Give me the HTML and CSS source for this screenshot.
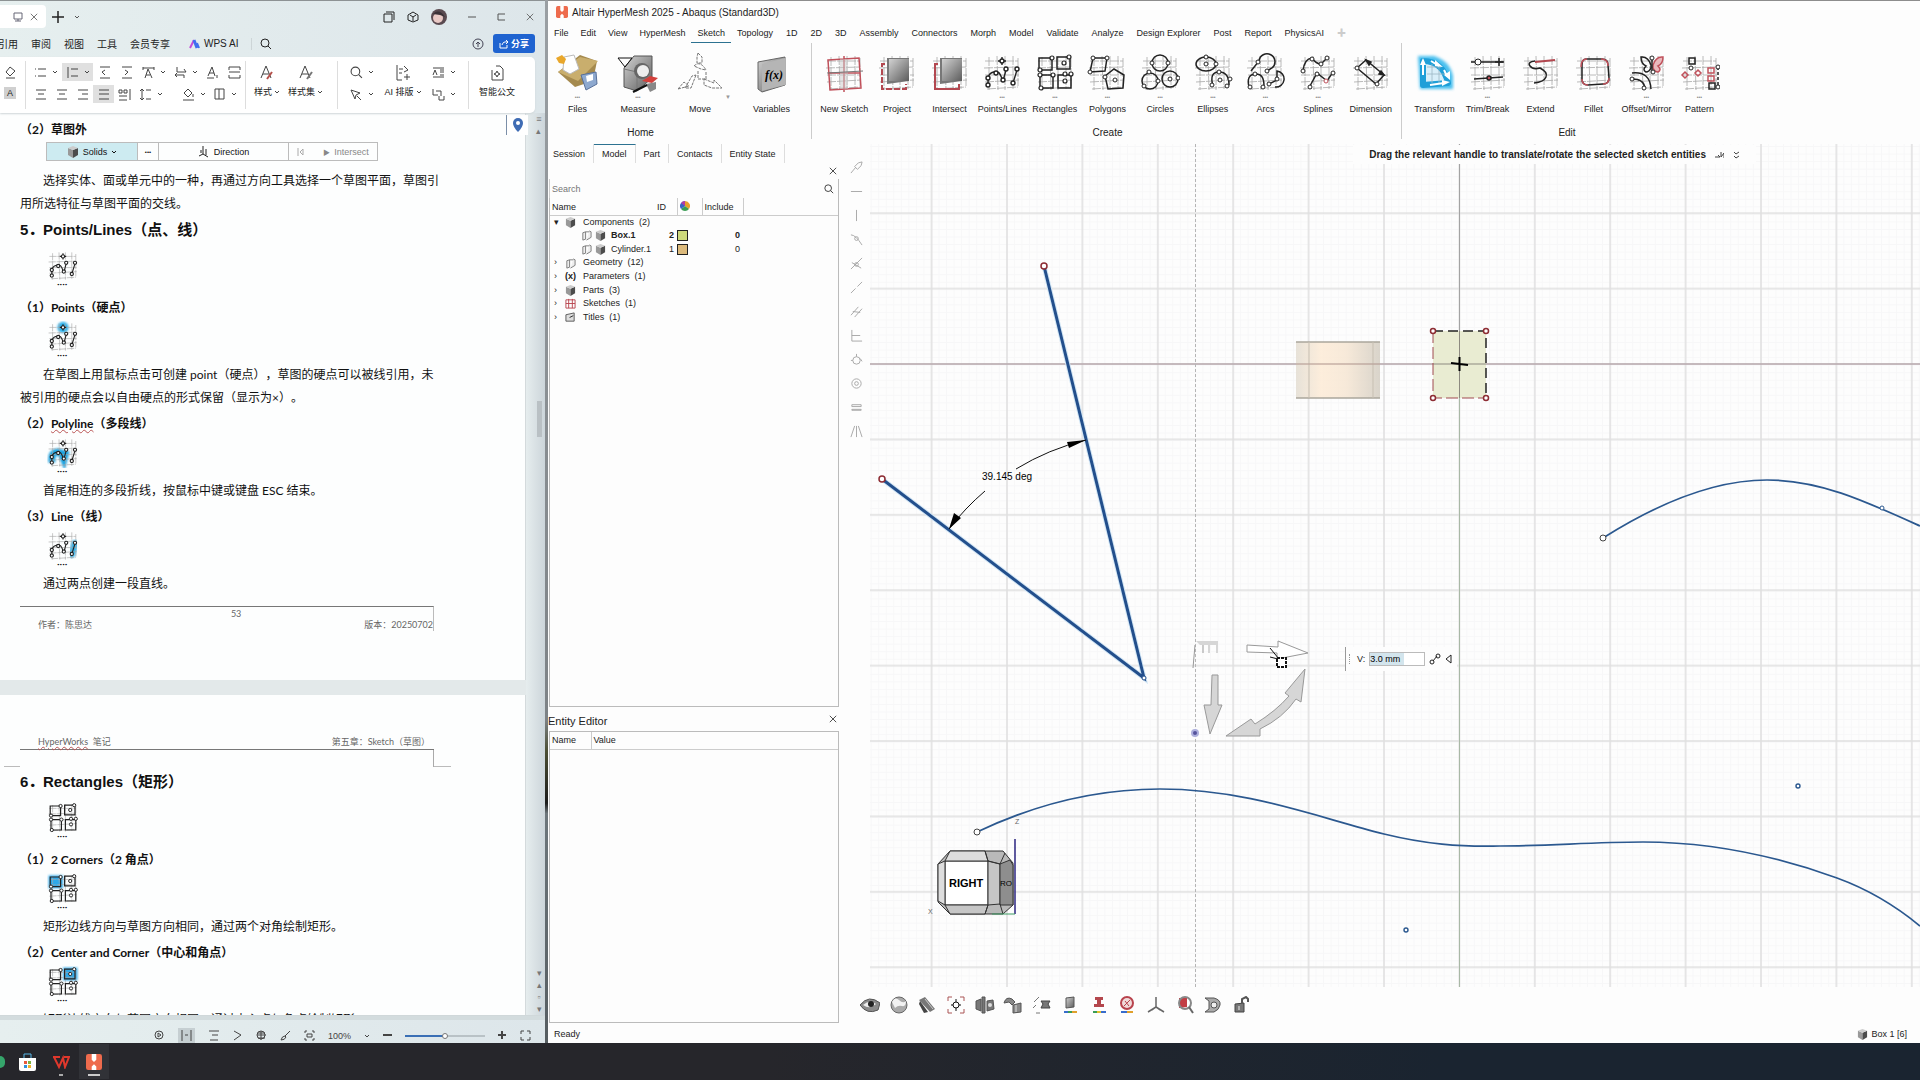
FILE: index.html
```html
<!DOCTYPE html>
<html lang="zh-CN">
<head>
  <meta charset="UTF-8">
  <meta name="viewport" content="width=device-width, initial-scale=1.0">
  <title>Altair HyperMesh 2025 - Abaqus (Standard3D)</title>
  <link rel="stylesheet" href="styles.css">
</head>
<body>
  <!-- shared icons -->
  <svg class="defs" aria-hidden="true">
    <defs>
      <linearGradient id="steel" x1="0" y1="0" x2="1" y2="1">
        <stop offset="0" stop-color="#d2d2d2"/><stop offset="1" stop-color="#5c5c5c"/>
      </linearGradient>
      <linearGradient id="cyl" x1="0" x2="1">
        <stop offset="0" stop-color="#e3ddd2"/><stop offset=".3" stop-color="#fdebd6"/>
        <stop offset=".6" stop-color="#f6e6d3"/><stop offset="1" stop-color="#d3cdc2"/>
      </linearGradient>
      <filter id="glow" x="-40%" y="-40%" width="180%" height="180%"><feGaussianBlur stdDeviation="1.5"/></filter>
    </defs>
    <symbol id="grid" viewBox="0 0 40 40">
      <path d="M3 8h33M2 15l34-1M3 22h34M3 29l34-2M5 36l31-2M7 4v33M15 3l1 34M23 3v34M31 3v33M36 5v28" stroke="#a8a8a8" stroke-width=".8" fill="none" stroke-dasharray="9 1"/>
    </symbol>
    <symbol id="points" viewBox="0 0 40 40">
      <use href="#grid"/>
      <g fill="none" stroke="#222" stroke-width="1.4">
        <path d="M20 4v8M16 8h8M6 32c0-8 0-12 6-13s6 2 9 9M21 28l3-11M31 30l4-13"/>
        <g fill="#fff"><circle cx="20" cy="8" r="2"/><circle cx="6" cy="32" r="2"/><circle cx="6" cy="25" r="2"/><circle cx="14" cy="20" r="2"/><circle cx="21" cy="27" r="2"/><circle cx="24" cy="16" r="2"/><circle cx="31" cy="30" r="2"/><circle cx="35" cy="16" r="2"/></g>
      </g>
    </symbol>
    <symbol id="rects" viewBox="0 0 40 40">
      <use href="#grid"/>
      <g fill="none" stroke="#222" stroke-width="1.5">
        <path d="M4 5h13v12H4zM22 4h13v12H22zM5 22h13v13H5zM23 22h13v13H23z"/>
        <g fill="#fff" stroke-width="1.2"><circle cx="17" cy="5" r="2"/><circle cx="5" cy="17" r="2"/><circle cx="34" cy="4" r="2"/><circle cx="29" cy="10" r="2"/><circle cx="5" cy="22" r="2"/><circle cx="18" cy="22" r="2"/><circle cx="6" cy="35" r="2"/><circle cx="30" cy="21" r="2"/><circle cx="36" cy="21" r="2"/><circle cx="30" cy="28" r="2"/></g>
      </g>
    </symbol>
    <symbol id="hm" viewBox="0 0 14 14">
      <rect width="14" height="14" rx="2" fill="#ee6b4d"/><path d="M5 0v5l2 2 2-2V0zM5 14v-3l2-2 2 2v3z" fill="#fff"/>
    </symbol>
    <symbol id="sheet" viewBox="0 0 12 12">
      <path d="M2 3l3-1v8l-3 1zM5 2h4M9 1l2 1v6L6 11" fill="#eee" stroke="#777"/>
    </symbol>
    <symbol id="block" viewBox="0 0 12 12">
      <path d="M1 2l5 2v8l-5-3z" fill="#999"/><path d="M6 4l5-2v7l-5 3z" fill="#4c4c4c"/><path d="M1 2l5-2 5 2-5 2z" fill="#ccc"/>
    </symbol>
    <symbol id="search" viewBox="0 0 12 12">
      <circle cx="5" cy="5" r="4" fill="none" stroke="currentColor"/><path d="M8 8l3 3" stroke="currentColor"/>
    </symbol>
    <symbol id="close" viewBox="0 0 10 10"><path d="M1 1l8 8M9 1L1 9" stroke="currentColor"/></symbol>
    <symbol id="chev" viewBox="0 0 6 6"><path d="M1 2l2 2 2-2" fill="none" stroke="currentColor"/></symbol>
  </svg>

  <main class="desktop">
    <!-- WPS Writer -->
    <section class="wps">
      <header class="wps-title">
        <div class="wps-tab">
          <svg width="12" height="12" viewBox="0 0 12 12"><path d="M2 2h8v6H2zM6 8v2M3 10h6" fill="none" stroke="#667"/></svg>
          <svg width="8" height="8"><use href="#close"/></svg>
        </div>
        <button class="plus" aria-label="New tab"><svg width="12" height="12" viewBox="0 0 12 12"><path d="M6 0v12M0 6h12" stroke="#222" stroke-width="1.5"/></svg></button>
        <svg width="6" height="6"><use href="#chev"/></svg>
        <div class="win-buttons">
          <button aria-label="Windows"><svg width="12" height="12" viewBox="0 0 12 12"><path d="M1 3h8v8H1zM3 1h8v8" fill="none" stroke="#222"/></svg></button>
          <button aria-label="Apps"><svg width="12" height="12" viewBox="0 0 12 12"><path d="M6 1l5 3v5l-5 2-5-2V4zM3 4l3 2 3-2M6 6v4" fill="none" stroke="#222"/></svg></button>
          <button aria-label="Account"><svg width="16" height="16" viewBox="0 0 16 16"><circle cx="8" cy="8" r="8" fill="#5a4a50"/><circle cx="7" cy="9" r="5" fill="#e9c9c5"/><path d="M2 5q6-6 12 3l-5-2z" fill="#3b3238"/></svg></button>
          <button aria-label="Minimize"><svg width="8" height="8" viewBox="0 0 8 8"><path d="M0 4h8" stroke="#555"/></svg></button>
          <button aria-label="Maximize"><svg width="8" height="8" viewBox="0 0 8 8"><path d="M1 1h7M1 1v6h7" fill="none" stroke="#555"/></svg></button>
          <button aria-label="Close"><svg width="8" height="8"><use href="#close"/></svg></button>
        </div>
      </header>

      <nav class="wps-menu">
        <a href="#" class="cut">引用</a>
        <a href="#">审阅</a>
        <a href="#">视图</a>
        <a href="#">工具</a>
        <a href="#">会员专享</a>
        <a href="#" class="ai"><svg width="11" height="10" viewBox="0 0 11 10"><path d="M1 9l4-8" stroke="#c54bd8" stroke-width="2"/><path d="M5 1l3 8" stroke="#3f6ff0" stroke-width="3"/><path d="M8 4l2 5" stroke="#3f6ff0" stroke-width="2"/></svg>WPS AI</a>
        <button class="find" aria-label="Search"><svg width="12" height="12"><use href="#search"/></svg></button>
        <svg class="cloud" width="12" height="12" viewBox="0 0 12 12"><circle cx="6" cy="6" r="5" fill="none" stroke="#445"/><path d="M6 9V4M4 6l2-2 2 2" fill="none" stroke="#445"/></svg>
        <button class="share"><svg width="10" height="10" viewBox="0 0 10 10"><path d="M1 4v5h7V6M3 6q1-4 6-3M7 1l2 2-2 2" fill="none" stroke="#fff"/></svg>分享</button>
      </nav>

      <div class="wps-ribbon">
        <div class="rb rb-first">
          <button aria-label="Eraser"><svg width="13" height="13" viewBox="0 0 13 13"><path d="M6 1l5 4-5 5-4-4zM2 12h9" /></svg></button>
          <button class="shade" aria-label="Shading">A</button>
        </div>
        <div class="rb rb-para">
          <div class="rb-row">
            <button class="wide" aria-label="Bullets"><svg width="13" height="13" viewBox="0 0 13 13"><path d="M1 3h1M1 10h1M4 3h8M4 10h8"/></svg><svg class="c"><use href="#chev"/></svg></button>
            <button class="wide on" aria-label="Numbering"><svg width="13" height="13" viewBox="0 0 13 13"><path d="M2 1v11M5 3h7M5 10h7"/></svg><svg class="c"><use href="#chev"/></svg></button>
            <button aria-label="Outdent"><svg width="13" height="13" viewBox="0 0 13 13"><path d="M2 1h10M2 12h10M7 4L4 6l3 3"/></svg></button>
            <button aria-label="Indent"><svg width="13" height="13" viewBox="0 0 13 13"><path d="M2 1h10M2 12h10M5 4l3 2-3 3"/></svg></button>
            <button class="wide" aria-label="Char scale"><svg width="13" height="13" viewBox="0 0 13 13"><path d="M3 12l3-9 4 9M4 9h4M1 2h11M1 1v3M12 1v3"/></svg><svg class="c"><use href="#chev"/></svg></button>
            <button class="wide" aria-label="Direction"><svg width="13" height="13" viewBox="0 0 13 13"><path d="M3 1v5h9M10 3l2 3M1 9h9v3M3 7L1 9l2 2"/></svg><svg class="c"><use href="#chev"/></svg></button>
            <button aria-label="Font box"><svg width="13" height="13" viewBox="0 0 13 13"><path d="M2 10l4-9 3 9M3 7h5M1 12h7M11 9v3"/></svg></button>
            <button aria-label="Marks"><svg width="13" height="13" viewBox="0 0 13 13"><path d="M1 4V1h11v3M1 9v3h11V9M1 6h11"/></svg></button>
          </div>
          <div class="rb-row">
            <button aria-label="Left"><svg width="13" height="13" viewBox="0 0 13 13"><path d="M2 2h10M2 11h10M4 6h6"/></svg></button>
            <button aria-label="Center"><svg width="13" height="13" viewBox="0 0 13 13"><path d="M2 2h10M4 6h6M2 11h10"/></svg></button>
            <button aria-label="Right"><svg width="13" height="13" viewBox="0 0 13 13"><path d="M2 2h10M6 6h6M2 11h10"/></svg></button>
            <button class="on" aria-label="Justify"><svg width="13" height="13" viewBox="0 0 13 13"><path d="M2 2h10M2 6h10M2 11h10"/></svg></button>
            <button aria-label="Distribute"><svg width="13" height="13" viewBox="0 0 13 13"><path d="M1 2h3v3H1zM6 2h3v3H6zM1 8h8M1 12h8M12 1v11"/></svg></button>
            <button class="wide" aria-label="Spacing"><svg width="13" height="13" viewBox="0 0 13 13"><path d="M3 1v11M1 3l2-2 2 2M1 10l2 2 2-2M7 2h5M7 11h5"/></svg><svg class="c"><use href="#chev"/></svg></button>
            <button class="wide gap" aria-label="Fill"><svg width="13" height="13" viewBox="0 0 13 13"><path d="M6 1l4 4-4 4-4-4zM1 12h11M11 6v3"/></svg><svg class="c"><use href="#chev"/></svg></button>
            <button class="wide" aria-label="Borders"><svg width="13" height="13" viewBox="0 0 13 13"><path d="M2 1h9v10H2zM6 1v10"/></svg><svg class="c"><use href="#chev"/></svg></button>
          </div>
        </div>
        <div class="rb rb-style">
          <button class="tall"><svg width="16" height="18" viewBox="0 0 16 18"><path d="M2 14L7 2l5 12M4 10h6"/><path d="M13 8l-5 7" stroke="#b5504b" stroke-width="2"/></svg><span>样式<svg class="c"><use href="#chev"/></svg></span></button>
          <button class="tall"><svg width="16" height="18" viewBox="0 0 16 18"><path d="M2 14L7 2l5 12M4 10h6"/><path d="M14 8l-5 7" stroke-width="2" stroke="#777"/></svg><span>样式集<svg class="c"><use href="#chev"/></svg></span></button>
        </div>
        <div class="rb rb-ai">
          <div class="pair">
            <button class="wide" aria-label="Find"><svg width="13" height="13"><use href="#search"/></svg><svg class="c"><use href="#chev"/></svg></button>
            <button class="wide" aria-label="Select"><svg width="13" height="13" viewBox="0 0 13 13"><path d="M1 2l9 3-4 2-1 4zM7 8l4 4"/></svg><svg class="c"><use href="#chev"/></svg></button>
          </div>
          <button class="tall"><svg width="16" height="18" viewBox="0 0 16 18"><path d="M2 1v15h5M4 5h4M4 9h3M9 2l4 4-4 2M12 10v6M9 13h6"/></svg><span>AI 排版<svg class="c"><use href="#chev"/></svg></span></button>
          <div class="pair">
            <button class="wide" aria-label="Text"><svg width="13" height="13" viewBox="0 0 13 13"><path d="M1 2h11M1 11h11M1 9l2-5 2 5M8 4h4M8 6h4M8 9h4"/></svg><svg class="c"><use href="#chev"/></svg></button>
            <button class="wide" aria-label="Arrange"><svg width="13" height="13" viewBox="0 0 13 13"><path d="M1 1v6h5M4 3h5v5M7 8v4h5V8"/></svg><svg class="c"><use href="#chev"/></svg></button>
          </div>
        </div>
        <div class="rb rb-doc">
          <button class="tall"><svg width="16" height="18" viewBox="0 0 16 18"><path d="M3 6v10h11V5l-3-3H7M8 7l1 2 2 1-2 1-1 2-1-2-2-1 2-1z"/></svg><span>智能公文</span></button>
        </div>
      </div>

      <div class="wps-view">
        <div class="pages">
          <article class="page page-first">
            <h4>（2）草图外</h4>
            <div class="selector">
              <span class="solids"><svg width="12" height="12"><use href="#block"/></svg>Solids <svg class="c"><use href="#chev"/></svg></span>
              <span class="more">•••</span>
              <span class="dir"><svg width="12" height="12" viewBox="0 0 12 12"><path d="M5 0v8l-4 2M5 8l5 3M8 3v6M3 4v3" fill="none" stroke="#222"/></svg>Direction</span>
              <span class="isect"><svg width="8" height="8" viewBox="0 0 8 8"><path d="M1 0v8M6 1L3 4l3 3z" fill="none" stroke="#aaa"/></svg><i>▶</i>Intersect</span>
            </div>
            <p>选择实体、面或单元中的一种，再通过方向工具选择一个草图平面，草图引用所选特征与草图平面的交线。</p>
            <h3><b>5．</b>Points/Lines（点、线）</h3>
            <figure><svg viewBox="0 0 40 40"><use href="#points"/></svg></figure>
            <h4>（1）Points（硬点）</h4>
            <figure><svg viewBox="0 0 40 40"><circle cx="20" cy="8" r="7" fill="#2fb4ee" filter="url(#glow)"/><use href="#points"/></svg></figure>
            <p>在草图上用鼠标点击可创建 point（硬点），草图的硬点可以被线引用，未被引用的硬点会以自由硬点的形式保留（显示为×）。</p>
            <h4>（2）<u>Polyline</u>（多段线）</h4>
            <figure><svg viewBox="0 0 40 40"><path d="M6 32c0-8 0-12 6-13s6 2 9 9l3-11" stroke="#1fa3e0" stroke-width="9" fill="none" filter="url(#glow)"/><use href="#points"/></svg></figure>
            <p>首尾相连的多段折线，按鼠标中键或键盘 ESC 结束。</p>
            <h4>（3）Line（线）</h4>
            <figure><svg viewBox="0 0 40 40"><path d="M31 30l4-13" stroke="#2fb4ee" stroke-width="9" stroke-linecap="round" filter="url(#glow)"/><use href="#points"/></svg></figure>
            <p>通过两点创建一段直线。</p>
            <footer class="page-foot"><span>作者：陈思达</span><span class="num">53</span><span>版本：20250702</span></footer>
          </article>
          <article class="page">
            <div class="page-head"><span><u>HyperWorks</u>&nbsp; 笔记</span><span>第五章：Sketch（草图）</span></div>
            <div class="corners"></div>
            <h3><b>6．</b>Rectangles（矩形）</h3>
            <figure><svg viewBox="0 0 40 40"><use href="#rects"/></svg></figure>
            <h4>（1）2 Corners（2 角点）</h4>
            <figure><svg viewBox="0 0 40 40"><path d="M2 3h18v16H2z" fill="#2fa9ea" filter="url(#glow)"/><use href="#rects"/></svg></figure>
            <p>矩形边线方向与草图方向相同，通过两个对角绘制矩形。</p>
            <h4>（2）Center and Corner（中心和角点）</h4>
            <figure><svg viewBox="0 0 40 40"><path d="M20 2h18v16H20z" fill="#2fa9ea" filter="url(#glow)"/><use href="#rects"/></svg></figure>
            <p>矩形边线方向与草图方向相同，通过中心点与角点绘制矩形。</p>
          </article>
        </div>
        <div class="pin"><svg width="12" height="14" viewBox="0 0 12 14"><path d="M6 14Q1 9 1 5a5 5 0 0110 0q0 4-5 9z" fill="#3f6cb4"/><circle cx="6" cy="5" r="2" fill="#fff"/></svg></div>
        <div class="wps-scroll">
          <span>≡<br>▴</span>
          <i class="thumb"></i>
          <span class="ends">▾<br>▴<br>▫<br>▾</span>
        </div>
      </div>

      <footer class="wps-status">
        <svg width="11" height="11" viewBox="0 0 11 11"><circle cx="5" cy="5" r="4"/><path d="M4 3v4l3-2z"/></svg>
        <svg class="on" width="17" height="15" viewBox="-3 -2 17 15"><path d="M1 0v11M10 0v11M4 5h3"/></svg>
        <svg width="11" height="11" viewBox="0 0 11 11"><path d="M1 1h10M4 5h6M2 10h8"/></svg>
        <svg width="11" height="11" viewBox="0 0 11 11"><path d="M2 1l7 4-7 5"/></svg>
        <svg width="11" height="11" viewBox="0 0 11 11"><circle cx="5" cy="5" r="4"/><path d="M1 5h9M5 1v9M2 3h7M2 8h7"/></svg>
        <svg width="11" height="11" viewBox="0 0 11 11"><path d="M10 1L5 6M5 6q-3 0-4 4 4 0 5-3z"/></svg>
        <svg width="11" height="11" viewBox="0 0 11 11"><path d="M1 3V1h2M8 1h2v2M1 8v2h2M8 10h2V8M3 4h5v3H3z"/></svg>
        <label for="zoom">100%</label>
        <svg class="c"><use href="#chev"/></svg>
        <button aria-label="Zoom out"><svg width="9" height="9" viewBox="0 0 9 9"><path d="M0 4h9" stroke-width="2"/></svg></button>
        <input type="range" id="zoom" min="10" max="190" value="100">
        <button aria-label="Zoom in"><svg width="9" height="9" viewBox="0 0 9 9"><path d="M0 4h8M4 0v8" stroke-width="2"/></svg></button>
        <svg width="11" height="11" viewBox="0 0 11 11"><path d="M1 4V1h3M7 1h3v3M1 7v3h3M7 10h3V7"/></svg>
      </footer>
    </section>

    <div class="backdrop"></div>

    <!-- HyperMesh -->
    <section class="hm">
      <header class="hm-title"><svg width="12" height="12"><use href="#hm"/></svg><h1>Altair HyperMesh 2025 - Abaqus (Standard3D)</h1></header>
      <nav class="hm-menu">
        <a href="#">File</a><a href="#">Edit</a><a href="#">View</a><a href="#">HyperMesh</a><a href="#" class="active">Sketch</a><a href="#">Topology</a><a href="#">1D</a><a href="#">2D</a><a href="#">3D</a><a href="#">Assembly</a><a href="#">Connectors</a><a href="#">Morph</a><a href="#">Model</a><a href="#">Validate</a><a href="#">Analyze</a><a href="#">Design Explorer</a><a href="#">Post</a><a href="#">Report</a><a href="#">PhysicsAI</a><span class="add">✚</span>
      </nav>

      <div class="hm-ribbon">
        <div class="group home">
          <div class="tools">
            <button class="dots"><svg viewBox="0 0 44 40"><path d="M2 19l22-17 17 6-4 20-18 6z" fill="#a58a4e"/><path d="M2 19l22-15 18 4-20 20z" fill="#c9ae6d"/><path d="M8 4l10-2 5 14-9 5-7-4z" fill="#fff" stroke="#bbb"/><path d="M25 22l15-3 1 12-11 6z" fill="#8ea9cf" stroke="#59719a"/><path d="M30 23l7-2v6l-6 2z" fill="#fff"/><path d="M0 5l6-3 4 4-2 5-5-1z" fill="#e9a72b"/></svg><span>Files</span></button>
            <button class="dots"><svg viewBox="0 0 44 40"><path d="M8 15l10-12 18 0v22l-15 13-13-4z" fill="url(#steel)" stroke="#555"/><path d="M8 16l13 3v18" fill="none" stroke="#777"/><circle cx="26" cy="18" r="8" fill="#666"/><circle cx="27" cy="18" r="6" fill="#eee"/><path d="M2 5h14l-7 9z" fill="none" stroke="#111"/><path d="M26 28l8-5 8 2-6 5z" fill="#d3403c"/><path d="M30 31l10-2v7l-6 3z" fill="#888"/><path d="M17 39l14-7" stroke="#111" stroke-width="2"/></svg><span>Measure</span></button>
            <button class="move"><svg viewBox="0 0 44 40"><g fill="#fff" stroke="#777" stroke-dasharray="3 1"><path d="M20 0l4 4v6h-5V4zM16 13q6-6 12 4l-5-1zM20 18v8h8v-8M18 22l-5 13h-6l7-12zM0 36l6-7 5 4zM26 26l10 4v-3l8 8-10 0-8-3z"/></g></svg><span>Move</span></button>
            <button class="vars"><svg viewBox="0 0 44 40"><path d="M8 9l27-5v28L12 39l-4-3z" fill="url(#steel)" stroke="#666"/><path d="M12 11l23-6v27l-23 6z" fill="#b5b5b5"/><text x="15" y="26" class="fx">f(x)</text></svg><span>Variables</span></button>
          </div>
          <h2>Home</h2>
        </div>
        <div class="group create">
          <div class="tools">
            <button><svg viewBox="0 0 40 40"><use href="#grid"/><path d="M4 7l31-2 2 30-31 2zM4 20h32M20 3v36" fill="none" stroke="#c0515b" stroke-width="1.5"/><path d="M16 6h8v30h-8z" fill="#ccc" opacity=".5"/><path d="M3 20l36-2" stroke="#777"/></svg><span>New Sketch</span></button>
            <button><svg viewBox="0 0 40 40"><use href="#grid"/><path d="M8 11H5v25h24v-5" fill="none" stroke="#b34850" stroke-width="2" stroke-dasharray="6 2"/><path d="M10 5h22v23l-22 3z" fill="#777"/><path d="M12 6h20v22H12z" fill="url(#steel)"/></svg><span>Project</span></button>
            <button><svg viewBox="0 0 40 40"><use href="#grid"/><path d="M8 11H5v25h24v-5" fill="none" stroke="#b34850" stroke-width="2"/><path d="M10 5h22v23l-22 3z" fill="#777"/><path d="M12 6h20v22H12z" fill="url(#steel)"/></svg><span>Intersect</span></button>
            <button class="dots"><svg viewBox="0 0 40 40"><use href="#points"/></svg><span>Points/Lines</span></button>
            <button class="dots"><svg viewBox="0 0 40 40"><use href="#rects"/></svg><span>Rectangles</span></button>
            <button class="dots"><svg viewBox="0 0 40 40"><use href="#grid"/><g class="ln"><path d="M6 5h14l-2 13-15 1zM18 23l9-7 10 6-1 13-15 1z"/><g class="pt"><circle cx="6" cy="5" r="2"/><circle cx="20" cy="5" r="2"/><circle cx="3" cy="19" r="2"/><circle cx="18" cy="24" r="2"/><circle cx="28" cy="27" r="2"/></g></g></svg><span>Polygons</span></button>
            <button class="dots"><svg viewBox="0 0 40 40"><use href="#grid"/><g class="ln"><circle cx="20" cy="10" r="8"/><circle cx="10" cy="28" r="8"/><circle cx="30" cy="26" r="8"/><g class="pt"><circle cx="12" cy="10" r="2"/><circle cx="28" cy="10" r="2"/><circle cx="9" cy="19" r="2"/><circle cx="4" cy="33" r="2"/><circle cx="18" cy="28" r="2"/><circle cx="30" cy="26" r="2"/><circle cx="38" cy="25" r="2"/></g></g></svg><span>Circles</span></button>
            <button class="dots"><svg viewBox="0 0 40 40"><use href="#grid"/><g class="ln"><ellipse cx="13" cy="11" rx="10" ry="7"/><path d="M20 33q-4-14 6-14t10 13"/><g class="pt"><circle cx="13" cy="4" r="2"/><circle cx="13" cy="11" r="2"/><circle cx="23" cy="11" r="2"/><circle cx="26" cy="19" r="2"/><circle cx="27" cy="27" r="2"/><circle cx="19" cy="32" r="2"/><circle cx="34" cy="33" r="2"/><circle cx="37" cy="26" r="2"/></g></g></svg><span>Ellipses</span></button>
            <button class="dots"><svg viewBox="0 0 40 40"><use href="#grid"/><g class="ln"><path d="M6 18L14 8a8 8 0 1113 7l-5 3M4 34q-3-12 6-13t9 12M24 31l8-4V18a8 8 0 11-2 16"/><g class="pt"><circle cx="13" cy="9" r="2"/><circle cx="22" cy="18" r="2"/><circle cx="10" cy="21" r="2"/><circle cx="5" cy="34" r="2"/><circle cx="18" cy="34" r="2"/><circle cx="32" cy="26" r="2"/><circle cx="24" cy="31" r="2"/></g></g></svg><span>Arcs</span></button>
            <button class="dots"><svg viewBox="0 0 40 40"><use href="#grid"/><g class="ln"><path d="M5 18q1-12 9-13 4 6 9 6l6-6M12 33l7-13 10 8 6-9"/><g class="pt"><circle cx="5" cy="18" r="2"/><circle cx="14" cy="6" r="2"/><circle cx="23" cy="11" r="2"/><circle cx="29" cy="5" r="2"/><circle cx="12" cy="34" r="2"/><circle cx="19" cy="21" r="2"/><circle cx="28" cy="28" r="2" stroke="#c0515b"/><circle cx="35" cy="20" r="2"/></g></g></svg><span>Splines</span></button>
            <button><svg viewBox="0 0 40 40"><use href="#grid"/><g class="ln"><path d="M6 15l9-8 18 15-8 9z"/><path d="M15 7l3 5 2-3zM33 22l-5-1 2-3z" fill="#222"/><g class="pt"><circle cx="6" cy="15" r="2"/><circle cx="26" cy="31" r="2"/></g></g></svg><span>Dimension</span></button>
          </div>
          <h2>Create</h2>
        </div>
        <div class="group edit">
          <div class="tools">
            <button><svg viewBox="0 0 40 40"><path d="M3 3h16q16 5 19 20v13H5z" fill="#49c0ef" filter="url(#glow)"/><path d="M8 32V8q20 0 25 22z" fill="#d9eff9" stroke="#1f9fd8" stroke-width="6" stroke-linejoin="round"/><path d="M12 14h14M12 21h18M17 11v19M24 14v16" stroke="#9db8c4" stroke-width=".8"/><path d="M8 22V10M16 8l8 5M29 17l3 6M15 32l14-2" stroke="#fff" stroke-width="2"/><path d="M5 12l3-7 3 7zM20 7l8 7-8-1zM29 22l6 5 0-9zM27 27l8 2-8 4z" fill="#fff"/></svg><span>Transform</span></button>
            <button class="dots"><svg viewBox="0 0 40 40"><use href="#grid"/><g class="ln"><path d="M3 9h33M6 26l29-2"/><circle class="w" cx="10" cy="9" r="3"/><path d="M31 5v8M27 9h8"/><circle cx="21" cy="25" r="2" fill="#c0515b"/></g></svg><span>Trim/Break</span></button>
            <button><svg viewBox="0 0 40 40"><use href="#grid"/><g class="ln"><path d="M14 8q-8 1-5 5t10 2q8 4 6 9t-12 6"/><path d="M14 9l20-2" stroke="#b34850" stroke-width="2"/></g></svg><span>Extend</span></button>
            <button><svg viewBox="0 0 40 40"><use href="#grid"/><g class="ln"><path d="M12 6h16q6 0 6 6l1 13q0 6-6 6l-15 1q-6 0-6-6V12q0-6 4-6z"/><path d="M7 14q0-8 6-8M27 6q7 0 7 7M35 25q0 6-6 6M14 32q-6 0-6-6" stroke="#c0515b"/></g></svg><span>Fillet</span></button>
            <button class="dots"><svg viewBox="0 0 40 40"><use href="#grid"/><g class="ln"><path d="M24 12q-3-9-10-8 0 7 5 9-4 4 0 6 3 0 5-4z"/><path d="M26 12q3-9 10-8 0 7-5 9 4 4 0 6-3 0-5-4z" fill="#e9b9bd" stroke="#c0515b"/><path d="M25 6v14M5 26q12 0 13 9M5 20q18-2 19 16"/><g class="pt"><circle cx="25" cy="5" r="2"/><circle cx="26" cy="19" r="2"/><circle cx="5" cy="26" r="2"/><circle cx="17" cy="35" r="2"/></g></g></svg><span>Offset/Mirror</span></button>
            <button class="dots"><svg viewBox="0 0 40 40"><use href="#grid"/><g class="ln"><path d="M9 5h6v6H9zM29 30h6v6h-6z"/><path d="M28 15h6v5h-6zM28 23h6v5h-6zM5 19l3 3-3 3-3-3zM18 17l3 3-3 3-3-3z" stroke="#c0515b"/><path d="M38 14v20" stroke-dasharray="3 2"/><g class="pt"><circle cx="11" cy="15" r="2"/><circle cx="38" cy="14" r="2"/><circle cx="38" cy="34" r="2"/></g></g></svg><span>Pattern</span></button>
          </div>
          <h2>Edit</h2>
        </div>
      </div>

      <div class="hm-body">
        <aside class="browser">
          <div class="tabs" role="tablist">
            <button role="tab">Session</button>
            <button role="tab" class="active">Model</button>
            <button role="tab">Part</button>
            <button role="tab">Contacts</button>
            <button role="tab">Entity State</button>
          </div>
          <button class="shut" aria-label="Close browser"><svg width="8" height="8"><use href="#close"/></svg></button>
          <div class="search-row">
            <input type="text" placeholder="Search" aria-label="Search">
            <svg width="10" height="10"><use href="#search"/></svg>
          </div>
          <div class="tree-box">
            <table class="tree">
              <colgroup><col class="c-name"><col class="c-id"><col class="c-col"><col class="c-inc"><col></colgroup>
              <thead><tr><th>Name</th><th>ID</th><th><svg width="10" height="10" viewBox="0 0 10 10"><path d="M5 5V0a5 5 0 014 8z" fill="#e5a02c"/><path d="M5 5l4 3a5 5 0 01-8 0z" fill="#3a9d54"/><path d="M5 5L1 8a5 5 0 014-8z" fill="#3763c4"/><path d="M5 5L1 2a5 5 0 014-2z" fill="#b23ba5"/></svg></th><th>Include</th><th></th></tr></thead>
              <tbody>
                <tr><td><i>▾</i><svg><use href="#block"/></svg>Components&nbsp; (2)</td><td></td><td></td><td></td><td></td></tr>
                <tr class="bold"><td class="kid"><svg><use href="#sheet"/></svg><svg><use href="#block"/></svg>Box.1</td><td>2</td><td><span class="swatch green"></span></td><td>0</td><td></td></tr>
                <tr><td class="kid"><svg><use href="#sheet"/></svg><svg><use href="#block"/></svg>Cylinder.1</td><td>1</td><td><span class="swatch tan"></span></td><td>0</td><td></td></tr>
                <tr><td><i>›</i><svg><use href="#sheet"/></svg>Geometry&nbsp; (12)</td><td></td><td></td><td></td><td></td></tr>
                <tr><td><i>›</i><b class="par">(x)</b>Parameters&nbsp; (1)</td><td></td><td></td><td></td><td></td></tr>
                <tr><td><i>›</i><svg><use href="#block"/></svg>Parts&nbsp; (3)</td><td></td><td></td><td></td><td></td></tr>
                <tr><td><i>›</i><svg viewBox="0 0 12 12"><path d="M1 2h10v9H1zM1 6h10M4 1v10M8 1v10" fill="none" stroke="#b8434d"/></svg>Sketches&nbsp; (1)</td><td></td><td></td><td></td><td></td></tr>
                <tr><td><i>›</i><svg viewBox="0 0 12 12"><path d="M1 3l9-2v9H1z" fill="#ddd" stroke="#555"/><path d="M5 6l4-2" stroke="#222"/></svg>Titles&nbsp; (1)</td><td></td><td></td><td></td><td></td></tr>
              </tbody>
            </table>
          </div>
          <div class="editor-head"><h2>Entity Editor</h2><button aria-label="Close editor"><svg width="8" height="8"><use href="#close"/></svg></button></div>
          <div class="editor-box">
            <table class="props"><thead><tr><th>Name</th><th>Value</th></tr></thead></table>
          </div>
        </aside>

        <div class="work">
          <div class="stage">
            <div class="constraints">
              <button aria-label="Fix"><svg viewBox="0 0 14 14"><path d="M1 13l5-6M5 6l4-4 4-1-1 4-4 4z"/></svg></button>
              <button aria-label="Horizontal"><svg viewBox="0 0 14 14"><path d="M1 7h12"/></svg></button>
              <button aria-label="Vertical"><svg viewBox="0 0 14 14"><path d="M7 1v12"/></svg></button>
              <button aria-label="Point on curve"><svg viewBox="0 0 14 14"><path d="M1 2q5 0 12 11"/><circle cx="7" cy="6" r="2"/></svg></button>
              <button aria-label="Midpoint"><svg viewBox="0 0 14 14"><path d="M1 13L13 1M2 6l10 6"/><circle cx="7" cy="8" r="2"/></svg></button>
              <button aria-label="Collinear"><svg viewBox="0 0 14 14"><path d="M1 13l5-5M8 6l5-5"/></svg></button>
              <button aria-label="Parallel"><svg viewBox="0 0 14 14"><path d="M1 11L9 2M5 13l8-9M3 7l8 1"/></svg></button>
              <button aria-label="Perpendicular"><svg viewBox="0 0 14 14"><path d="M2 1v12h11M2 7h9"/></svg></button>
              <button aria-label="Tangent"><svg viewBox="0 0 14 14"><circle cx="7" cy="8" r="4"/><path d="M1 8h2M7 1v3M11 6l2 3"/></svg></button>
              <button aria-label="Concentric"><svg viewBox="0 0 14 14"><circle cx="7" cy="7" r="5"/><circle cx="7" cy="7" r="2"/></svg></button>
              <button aria-label="Equal"><svg viewBox="0 0 14 14"><path d="M2 4h10v2H2zM2 9h10v1H2z"/></svg></button>
              <button aria-label="Symmetric"><svg viewBox="0 0 14 14"><path d="M5 1L1 13M7 1v12M9 1l4 12"/></svg></button>
            </div>
            <div class="canvas">
              <svg class="scene" viewBox="870 144 1050 843" preserveAspectRatio="xMinYMin slice">
                <defs>
                  <pattern id="minor" x="931" y="138.5" width="7.54" height="7.54" patternUnits="userSpaceOnUse"><path d="M0 .5h8M.5 0v8" stroke="#f7f7f8"/></pattern>
                  <pattern id="major" x="930.6" y="136.8" width="75.4" height="75.4" patternUnits="userSpaceOnUse"><path d="M0 1h76M1 0v76" stroke="#e0dfe0" stroke-width="1.5"/></pattern>
                </defs>
                <rect x="870" y="144" width="1050" height="843" fill="url(#minor)"/>
                <rect x="870" y="144" width="1050" height="843" fill="url(#major)"/>
                <path d="M870 364h1050" stroke="#a38c93"/>
                <path d="M1459.500 144v254" stroke="#a3a3a3"/>
                <path d="M1459.500 398v589" stroke="#a9b8a6"/>
                <path d="M1195.500 144v843" stroke="#b5b5b5" stroke-dasharray="3 2"/>
                <!-- solids -->
                <path d="M1296 342h84v56h-84z" fill="url(#cyl)" opacity=".85"/>
                <path d="M1296 342h84M1296 398h84" stroke="#aaa69c" stroke-width="1.5"/>
                <path d="M1309 342v56M1373 342v56" stroke="#c7bfb2"/>
                <path d="M1296 364h84" stroke="#b59c94"/>
                <path d="M1433 331h53v67h-53z" fill="#e9ecd2"/>
                <path d="M1433 364h53M1459.500 331v67" stroke="#8d8a80"/>
                <path d="M1433 331h53v67" fill="none" stroke="#222" stroke-width="1.500" stroke-dasharray="10 5"/>
                <path d="M1433 331v67h53" fill="none" stroke="#a04a50" stroke-dasharray="12 4"/>
                <path d="M1451 363l17 2M1459.500 357v14" stroke="#000" stroke-width="2"/>
                <g fill="#fff" stroke="#8d2c33" stroke-width="1.5"><circle cx="1433" cy="331" r="2.500"/><circle cx="1486" cy="331" r="2.500"/><circle cx="1433" cy="398" r="2.500"/><circle cx="1486" cy="398" r="2.500"/></g>
                <!-- angled lines and dimension -->
                <path d="M1044 266l100 412L882 479" fill="none" stroke="#d2e6f5" stroke-width="5"/>
                <path d="M1044 266l100 412L882 479" fill="none" stroke="#234f8c" stroke-width="3"/>
                <path d="M949 529A245 245 0 01985 491M1016 469A245 245 0 011086 440" fill="none" stroke="#111"/>
                <path d="M949 529l5-16 7 5zM1086 440l-17 8-2-6z"/>
                <text x="982" y="480" class="dim">39.145 deg</text>
                <g fill="#fff" stroke="#8d2c33" stroke-width="1.5"><circle cx="1044" cy="266" r="3"/><circle cx="882" cy="479" r="3"/></g>
                <circle cx="1144" cy="678" r="2" fill="#fff" stroke="#234f8c"/>
                <!-- splines -->
                <g fill="none" stroke="#2b588f" stroke-width="1.700">
                  <path d="M977 832C1040 802 1100 789 1160 789C1245 789 1310 815 1384 834C1425 844 1459 847 1500 846C1550 846 1590 842 1643 842C1700 842 1765 852 1837 878C1870 890 1897 907 1920 926"/>
                  <path d="M1603 538C1660 502 1715 480 1767 480C1820 480 1865 501 1920 526"/>
                </g>
                <g fill="#fff" stroke="#444"><circle cx="977" cy="832" r="3"/><circle cx="1603" cy="538" r="3"/></g>
                <g fill="#fff" stroke="#2b588f" stroke-width="1.400"><circle cx="1406" cy="930" r="2"/><circle cx="1798" cy="786" r="2"/><circle cx="1882" cy="508" r="2" stroke-width="1"/></g>
                <circle cx="1195" cy="733" r="3" fill="#56539c" stroke="#aeb0dd" stroke-width="2"/>
                <!-- transform handles -->
                <g fill="#d6d6d6" stroke="#999">
                  <path d="M1212 675h6v30h4l-12 29-6-29h7z"/>
                  <path d="M1305 669l-4 33-5-3q-13 19-36 30v7h-34l25-17 4 5q21-13 34-28l-4-3z"/>
                  <path d="M1196 641h22v12h-2v-8h-6v8h-2v-8h-8z" stroke="none"/>
                  <path d="M1195 645l-2 23M1203 645v8" fill="none"/>
                  <path d="M1247 645l31 2v-6l30 12-31 6v-6l-30-1z" fill="#fff"/>
                </g>
                <path d="M1270 648l9 11M1270 657l8 2" stroke="#111" fill="none"/>
                <path d="M1277 658h9v9h-9z" fill="#fff" stroke="#111" stroke-width="2" stroke-dasharray="3 1"/>
                <!-- view cube -->
                <g stroke="#333" stroke-linejoin="round">
                  <path d="M950 851h53l10 12v42l-10 9h-53l-12-12v-38z" fill="#b9b9b9"/>
                  <path d="M945 861h43v44h-43z" fill="#fff"/>
                  <path d="M950 851h35l3 10h-43zM945 861v44l-7-4v-37z" fill="#ddd"/>
                  <path d="M988 861l12 3v40l-12 1zM945 905h43l-3 9h-35z" fill="#c6c6c6"/>
                  <path d="M1000 864l10-4 3 5v40l-13 0z" fill="#8e8e8e"/>
                  <path d="M985 851l3 10 12 3 5-11M988 905l-3 9M1000 904l3 10" fill="none"/>
                </g>
                <path d="M1015 839v75" stroke="#2b2480" stroke-width="1.500"/><path d="M992 914h23" stroke="#3d9a63"/>
                <text x="949" y="887" class="face">RIGHT</text>
                <text x="1000" y="886" class="side">RO</text>
                <text x="928" y="914" class="axis">X</text>
                <text x="1015" y="824" class="axis">Z</text>
              </svg>
              <div class="guide">Drag the relevant handle to translate/rotate the selected sketch entities
                <svg width="9" height="7" viewBox="0 0 9 7"><path d="M0 6h5M3 4l2 2M6 1v5l3-4v5" fill="none" stroke="#444"/></svg>
                <svg width="7" height="8" viewBox="0 0 7 8"><path d="M1 1l2 2 3-2M1 5l2 2 3-2" fill="none" stroke="#444"/></svg>
              </div>
              <form class="value">
                <label for="val">V:</label>
                <input type="text" id="val" value="3.0 mm">
                <svg width="12" height="12" viewBox="0 0 12 12"><path d="M4 8l4-5" stroke="#222"/><circle cx="3" cy="9" r="2" fill="none" stroke="#222"/><circle cx="9" cy="3" r="2" fill="none" stroke="#222"/></svg>
                <svg width="8" height="10" viewBox="0 0 8 10"><path d="M6 1v8L1 5z" fill="none" stroke="#222"/></svg>
              </form>
            </div>
          </div>
          <div class="view-tools">
            <button aria-label="Show"><svg viewBox="0 0 20 18"><path d="M0 9q9-11 20-2l-2 7q-11 5-18-5z" fill="#8b8b8b" stroke="#555"/><path d="M3 9q7-6 13-1-6 6-13 1z" fill="#eee"/><circle cx="11" cy="8" r="3" fill="#222"/></svg></button>
            <button aria-label="Shade"><svg viewBox="0 0 20 18"><circle cx="10" cy="9" r="8" fill="#aaa" stroke="#666"/><path d="M3 6q3-6 7-2t7 1q0 6-4 5t-7 2z" fill="#f2f2f2"/></svg></button>
            <button aria-label="Find"><svg viewBox="0 0 20 18"><path d="M2 4l6-3 10 12-5 3z" fill="#777"/><path d="M3 5l8 11-4 1-5-9z" fill="#444"/><path d="M8 3l8 10" stroke="#ccc"/></svg></button>
            <button aria-label="Fit"><svg viewBox="0 0 20 18"><path d="M2 5V1h4M14 1h4v4M2 13v4h4M14 17h4v-4" fill="none" stroke="#a55"/><path d="M10 3v12M5 9h10" stroke="#111"/><circle cx="10" cy="9" r="3" fill="#fff" stroke="#111"/></svg></button>
            <button aria-label="Mask"><svg viewBox="0 0 20 18"><path d="M1 5l5-2v12l-5-2zM7 1h3v16H7zM12 5l6-1 1 9-7 2z" fill="#777" stroke="#555"/><circle cx="15" cy="9" r="2" fill="#ddd"/></svg></button>
            <button aria-label="Reverse"><svg viewBox="0 0 20 18"><path d="M1 7q2-7 8-4l3 3-3 3-3-3zM10 9l8-2v9l-8 1z" fill="#888" stroke="#555"/><path d="M13 9v7" stroke="#ddd"/></svg></button>
            <button aria-label="Adjacent"><svg viewBox="0 0 20 18"><path d="M2 6l5-5M1 12l3-3M4 17h4" stroke="#777" fill="none"/><path d="M9 5h9l-2 3 2 4H9l2-4z" fill="#777" stroke="#444"/></svg></button>
            <button aria-label="Elements"><svg viewBox="0 0 20 18"><path d="M6 2l8-1v10l-8 1z" fill="url(#steel)" stroke="#555"/><path d="M4 16h4" stroke="#386ccc" stroke-width="2"/><path d="M8 16h4" stroke="#3a9d54" stroke-width="2"/><path d="M12 16h5" stroke="#e0a02c" stroke-width="2"/></svg></button>
            <button aria-label="Loads"><svg viewBox="0 0 20 18"><path d="M6 1h8v3h-2v4h3v3H5V8h3V4H6z" fill="#b4474d"/><path d="M4 16h4" stroke="#3a9d54" stroke-width="2"/><path d="M8 16h4" stroke="#e0c02c" stroke-width="2"/><path d="M12 16h5" stroke="#386ccc" stroke-width="2"/></svg></button>
            <button aria-label="Quality"><svg viewBox="0 0 20 18"><circle cx="10" cy="7" r="6" fill="#f0dada" stroke="#b8434d" stroke-width="2"/><path d="M7 10l6-6M8 5l4 5" stroke="#b8434d"/><path d="M4 16h6" stroke="#386ccc" stroke-width="2"/><path d="M10 16h6" stroke="#e0a02c" stroke-width="2"/></svg></button>
            <button aria-label="Axes"><svg viewBox="0 0 20 18"><path d="M10 1v10M10 11l-8 5M10 11l8 5M6 14l4-3 4 3" fill="none" stroke="#666" stroke-width="1.500"/></svg></button>
            <button aria-label="Inspect"><svg viewBox="0 0 20 18"><path d="M4 2l8 0v9l-8 1z" fill="#c23d44"/><circle cx="10" cy="7" r="6" fill="none" stroke="#888" stroke-width="2"/><path d="M14 11l4 6" stroke="#666" stroke-width="2"/></svg></button>
            <button aria-label="Section"><svg viewBox="0 0 20 18"><path d="M2 2h9q7 2 6 7t-6 7H2l4-3V5z" fill="#aaa" stroke="#555"/><circle cx="11" cy="9" r="3" fill="#eee" stroke="#555"/></svg></button>
            <button aria-label="Lock"><svg viewBox="0 0 20 18"><path d="M3 8l9-1v9H3z" fill="#777" stroke="#444"/><path d="M10 7V3l4-2 2 2v3" fill="none" stroke="#555" stroke-width="2"/><path d="M7 10v4" stroke="#eee"/></svg></button>
          </div>
        </div>
      </div>

      <footer class="hm-status"><span>Ready</span><span><svg width="11" height="11"><use href="#block"/></svg>Box 1 [6]</span></footer>
    </section>
  </main>

  <footer class="taskbar">
    <button class="edge" aria-label="WeChat"></button>
    <button aria-label="Store"><svg width="17" height="18" viewBox="0 0 17 18"><path d="M5 5V1h7v4" fill="none" stroke="#58b7e8"/><path d="M0 5h17v11q0 2-2 2H2q-2 0-2-2z" fill="#fff"/><path d="M5 8h3v3H5z" fill="#e8593b"/><path d="M9 8h3v3H9z" fill="#7cb342"/><path d="M5 12h3v3H5z" fill="#2f93dd"/><path d="M9 12h3v3H9z" fill="#f0b429"/></svg></button>
    <button class="run" aria-label="WPS"><svg width="18" height="14" viewBox="0 0 18 14"><path d="M1 2h7M2 2l5 10 4-9 2 9 4-10h-5" fill="none" stroke="#e0382c" stroke-width="2"/></svg></button>
    <button class="run active" aria-label="HyperMesh"><svg width="16" height="16"><use href="#hm"/></svg></button>
  </footer>
</body>
</html>
```
FILE: styles.css
```css
* {
  margin: 0;
  padding: 0;
  box-sizing: border-box;
}

body {
  height: 100vh;
  display: flex;
  flex-direction: column;
  background: #25262b;
  color: #222;
  font-family: "Liberation Sans", "Noto Sans CJK SC", sans-serif;
  font-size: 9px;
  overflow: hidden;
}

button {
  background: none;
  border: 0;
  font: inherit;
  color: inherit;
  display: flex;
  align-items: center;
  justify-content: center;
}

a {
  color: inherit;
  text-decoration: none;
}

svg {
  flex: none;
}

.defs {
  position: absolute;
  width: 0;
  height: 0;
}

.c {
  width: 6px;
  height: 6px;
}

.desktop {
  flex: 1;
  min-height: 0;
  display: grid;
  grid-template-columns: 545fr 3fr 1372fr;
  grid-template-rows: 100%;
}

.backdrop {
  background: linear-gradient(#9a9fa3 0, #7d8286 69%, #4c4f34 72%, #1c1c1c 77%, #6d767b 78%, #565d61 100%);
}

/* WPS */
.wps {
  display: flex;
  flex-direction: column;
  min-width: 0;
  overflow: hidden;
  background: linear-gradient(90deg, #e6efef, #dde6ea);
  border-top: 1px solid #8d9294;
}

.wps-title {
  height: 31px;
  display: flex;
  align-items: center;
  color: #555;
}

.wps-tab {
  width: 46px;
  height: 23px;
  padding: 0 8px 0 12px;
  display: flex;
  align-items: center;
  justify-content: space-between;
  background: #fff;
  border-radius: 0 4px 4px 0;
}

.plus {
  margin: 0 10px 0 6px;
}

.win-buttons {
  margin-left: auto;
  padding-right: 11px;
  display: flex;
  align-items: center;
  gap: 21px;
}

.win-buttons button:nth-child(-n+2) {
  margin-right: -9px;
}

.wps-menu {
  height: 23px;
  display: flex;
  align-items: center;
  gap: 13px;
  font-size: 10px;
}

.wps-menu .cut {
  margin-left: -2px;
  white-space: nowrap;
}

.ai {
  display: flex;
  align-items: center;
  gap: 4px;
  margin-left: 6px;
}

.find {
  padding-left: 8px;
  border-left: 1px solid #cdd5d7;
}

.cloud {
  margin-left: auto;
  margin-right: -4px;
}

.share {
  width: 42px;
  height: 19px;
  margin-right: 10px;
  gap: 2px;
  border-radius: 3px;
  background: #1f63d0;
  color: #fff;
  font-weight: bold;
  font-size: 9px;
}

.wps-ribbon {
  height: 56px;
  margin: 2px 10px 0 0;
  padding: 4px 0;
  display: flex;
  background: #fff;
  border-radius: 0 5px 5px 0;
  box-shadow: 0 1px 2px #cfd6d8;
  position: relative;
  z-index: 1;
}

.wps-ribbon svg {
  fill: none;
  stroke: #444;
  color: #444;
}

.rb {
  border-right: 1px solid #ddd;
}

.rb:last-child {
  border: 0;
}

.rb-first {
  width: 26px;
}

.rb-first button {
  width: 21px;
  height: 22px;
}

.rb-first .shade {
  width: 12px;
  height: 12px;
  margin: 4px 0 0 4px;
  background: #d0d0d0;
}

.rb-para {
  width: 220px;
  padding-left: 4px;
}

.rb-row {
  display: flex;
  align-items: center;
  height: 22px;
}

.rb-row button,
.pair button {
  width: 21px;
  height: 18px;
}

.rb-row .wide,
.pair .wide {
  width: 31px;
  gap: 5px;
}

.rb-row:first-child {
  gap: 1px;
}

.rb-row .on {
  background: #e0e0e0;
}

.rb-row .gap {
  margin-left: 12px;
}

.rb-style {
  width: 92px;
  display: flex;
  gap: 8px;
  padding-left: 8px;
}

.tall {
  flex-direction: column;
  justify-content: flex-start;
  gap: 3px;
  height: 44px;
  padding-top: 3px;
  white-space: nowrap;
}

.tall span {
  display: flex;
  align-items: center;
  gap: 2px;
  line-height: 14px;
}

.rb-ai {
  width: 131px;
  display: flex;
  justify-content: space-between;
  padding: 0 8px;
}

.pair button {
  height: 22px;
}

.rb-doc {
  padding-left: 10px;
}

.wps-view {
  flex: 1;
  min-height: 0;
  display: flex;
  position: relative;
  border-bottom: 1px solid #d0d8da;
}

.pages {
  flex: 1;
  overflow: hidden;
  background: #e3e9ea;
}

.page {
  min-height: 567px;
  margin-bottom: 15px;
  padding: 0 91px 0 20px;
  background: #fdfefe;
  font-family: Lato, "Noto Sans CJK SC", sans-serif;
  font-size: 12px;
  color: #111;
  border-right: 1px solid #d4dadc;
  text-spacing-trim: space-all;
}

.page h4 {
  margin: 3px 0 -1px;
  font-size: 12px;
  line-height: 24px;
}

.page h3 {
  margin: 0 0 5px;
  font-family: "Liberation Sans", "Noto Sans CJK SC", sans-serif;
  font-size: 15px;
  line-height: 30px;
}

.page h3 b {
  display: inline-block;
  width: 23px;
}

.page p {
  line-height: 23px;
  text-indent: 23px;
  margin-right: -6px;
}

.page u {
  text-decoration: underline wavy #b55 1px;
}

figure {
  height: 40px;
  margin: 2px 0 2px 27px;
  position: relative;
}

h3 + figure {
  margin-bottom: 6px;
}

figure svg {
  width: 32px;
  height: 32px;
  display: block;
}

figure::after {
  content: "····";
  position: absolute;
  left: 10px;
  top: 27px;
  font-size: 10px;
}

.page-first {
  padding-top: 2px;
}

.selector {
  width: 332px;
  height: 19px;
  margin: 1px 0 8px 26px;
  display: flex;
  border: 1px solid #bcbcbc;
  font-family: "Liberation Sans", sans-serif;
  font-size: 9px;
}

.selector span {
  display: flex;
  align-items: center;
  justify-content: center;
  gap: 4px;
  border-right: 1px solid #bcbcbc;
}

.selector .solids {
  width: 91px;
  background: #cdebf1;
}

.selector .more {
  width: 21px;
  font-size: 6px;
}

.selector .dir {
  flex: 1;
}

.selector .isect {
  width: 88px;
  border: 0;
  color: #888;
}

.isect i {
  margin-left: 14px;
  font-style: normal;
  font-size: 7px;
}

.page-foot,
.page-head {
  display: flex;
  justify-content: space-between;
  font-size: 9px;
  color: #666;
}

.page-foot {
  margin-top: 11px;
  height: 25px;
  padding: 11px 0 0 18px;
  line-height: 14px;
  border-top: 1px solid #777;
  border-right: 1px solid #bbb;
  white-space: nowrap;
}

.page-foot .num {
  margin: -11px 0 0 16px;
}

.page-head {
  padding: 40px 4px 0 18px;
  line-height: 14px;
  border-bottom: 1px solid #777;
}

.corners {
  height: 17px;
  margin: 0 -17px 0 -16px;
  background: linear-gradient(#bbb, #bbb) 0 100% / 16px 1px no-repeat, linear-gradient(#bbb, #bbb) 100% 100% / 17px 1px no-repeat, linear-gradient(#aaa, #aaa) calc(100% - 17px) 0 / 1px 100% no-repeat;
}

.pin {
  position: absolute;
  top: 2px;
  right: 17px;
  width: 22px;
  height: 20px;
  display: flex;
  align-items: center;
  justify-content: center;
  background: #fff;
  border-left: 1px solid #7b8fa8;
}

.wps-scroll {
  width: 19px;
  padding-left: 7px;
  display: flex;
  flex-direction: column;
  align-items: center;
  background: linear-gradient(90deg, #e6edee, #ccd5da);
  color: #777;
  text-align: center;
  line-height: 12px;
}

.thumb {
  width: 5px;
  height: 36px;
  margin-top: 264px;
  background: #b9c0c4;
}

.ends {
  margin-top: auto;
}

.wps-status {
  height: 27px;
  padding: 8px 12px 0 154px;
  display: flex;
  align-items: center;
  gap: 13px;
  color: #444;
  font-size: 9px;
  border-top: 4px solid #d3dcde;
}

.wps-status svg {
  fill: none;
  stroke: #444;
}

.wps-status .on {
  background: #c6cfd2;
}

.wps-status input {
  appearance: none;
  width: 80px;
  height: 2px;
  background: linear-gradient(90deg, #3a6fb5 50%, #b9c2c6 50%);
}

.wps-status input::-webkit-slider-thumb {
  appearance: none;
  width: 6px;
  height: 6px;
  border-radius: 3px;
  border: 1px solid #777;
  background: #fff;
}

/* HyperMesh */
.hm {
  display: flex;
  flex-direction: column;
  min-width: 0;
  background: #fdfdfd;
  border-top: 1px solid #8d8d8d;
}

.hm-title {
  height: 22px;
  padding-left: 8px;
  display: flex;
  align-items: center;
  gap: 4px;
}

.hm-title h1 {
  font-size: 10px;
  font-weight: normal;
}

.hm-menu {
  height: 20px;
  padding-left: 6px;
  display: flex;
  gap: 12px;
  line-height: 20px;
  white-space: nowrap;
}

.hm-menu a:nth-child(n+6) {
  margin-right: 1px;
}

.hm-menu .active {
  margin: 0 -6px;
  padding: 0 6px;
  border-bottom: 1px solid #2c7291;
}

.hm-menu .add {
  color: #ccc;
}

.hm-ribbon {
  height: 101px;
  display: flex;
}

.group {
  padding: 9px 4px 0 6px;
  border-right: 1px solid #ccc;
  height: 96px;
}

.group h2 {
  margin-top: 12px;
  font-size: 10px;
  font-weight: normal;
  text-align: center;
  line-height: 14px;
}

.home {
  width: 264px;
  padding: 9px 0 0;
}

.create {
  width: 590px;
}

.edit {
  width: 328px;
  border: 0;
}

.tools {
  display: grid;
  grid-template-columns: repeat(11, 1fr);
}

.edit .tools {
  grid-template-columns: repeat(6, 1fr);
}

.home .tools {
  grid-template-columns: 59px 62px 62px 81px;
}

.tools button {
  flex-direction: column;
  height: 62px;
  justify-content: space-between;
  position: relative;
  white-space: nowrap;
}

.tools button svg {
  width: 40px;
  height: 42px;
}

.home .tools button svg {
  width: 44px;
}

.home h2 {
  width: 185px;
}

.dots::after {
  content: "•••";
  position: absolute;
  top: 42px;
  font-size: 5px;
  color: #888;
}

.move::after {
  content: "▼";
  position: absolute;
  top: 42px;
  right: 0;
  font-size: 6px;
  color: #999;
}

.ln {
  fill: none;
  stroke: #222;
  stroke-width: 1.5px;
}

.pt,
.w {
  fill: #fff;
  stroke-width: 1px;
}

.fx {
  font: italic bold 12px "Liberation Serif", serif;
}

.hm-body {
  flex: 1;
  min-height: 0;
  display: flex;
}

.browser {
  width: 291px;
  display: flex;
  flex-direction: column;
  position: relative;
}

.tabs {
  display: flex;
  height: 19px;
  align-items: stretch;
}

.tabs button {
  padding: 0 8px;
  border-right: 1px solid #ddd;
}

.tabs button:first-child {
  padding-left: 5px;
}

.tabs .active {
  border-top: 1px solid #2c7291;
}

.shut {
  height: 16px;
  margin: 0 2px 0 auto;
}

.search-row {
  height: 19px;
  margin-left: 1px;
  padding: 0 4px 0 2px;
  display: flex;
  align-items: center;
  border-left: 1px solid #ccc;
  border-right: 1px solid #bbb;
}

.search-row input {
  flex: 1;
  border: 0;
  outline: 0;
  font: inherit;
  background: none;
}

.tree-box,
.editor-box {
  margin-left: 1px;
  border: 1px solid #bbb;
  border-top-color: #ddd;
}

.tree-box {
  height: 509px;
  border-top: 0;
}

table {
  width: 100%;
  border-collapse: collapse;
  table-layout: fixed;
}

.tree {
  height: 126px;
}

.c-name {
  width: 105px;
}

.c-id {
  width: 22px;
}

.c-col {
  width: 25px;
}

.c-inc {
  width: 41px;
}

th {
  height: 17px;
  padding-left: 2px;
  font-weight: normal;
  text-align: left;
  border-bottom: 1px solid #ccc;
  white-space: nowrap;
}

.tree th {
  padding-top: 2px;
}

th + th {
  border-right: 1px solid #ccc;
}

th:last-child {
  border-right: 0;
}

.tree td {
  padding-right: 3px;
  white-space: nowrap;
  text-align: right;
  line-height: 13px;
  vertical-align: middle;
}

.tree td:first-child {
  text-align: left;
}

.tree td svg {
  width: 11px;
  height: 11px;
  margin-right: 7px;
  vertical-align: middle;
}

.tree td.kid {
  padding-left: 31px;
}

.kid svg:first-child {
  margin-right: 3px;
}

.kid svg + svg {
  margin-right: 5px;
}

.tree i {
  display: inline-block;
  width: 15px;
  padding-left: 4px;
  font-style: normal;
}

.par {
  display: inline-block;
  width: 18px;
}

.bold {
  font-weight: bold;
}

.swatch {
  display: block;
  width: 11px;
  height: 11px;
  border: 1px solid #222;
}

.green {
  background: #cdd97b;
}

.tan {
  background: #dcba7c;
}

.editor-head {
  height: 24px;
  padding-right: 2px;
  display: flex;
  align-items: center;
  justify-content: space-between;
}

.editor-head h2 {
  padding-top: 4px;
  font-size: 11px;
  font-weight: normal;
}

.editor-box {
  flex: 1;
  border-top-color: #bbb;
}

.props th:first-child {
  width: 41px;
  border-right: 1px solid #ccc;
}

.work {
  flex: 1;
  min-width: 0;
  display: flex;
  flex-direction: column;
}

.stage {
  flex: 1;
  min-height: 0;
  display: flex;
}

.constraints {
  width: 31px;
  padding-top: 11px;
}

.constraints button {
  width: 35px;
  height: 24px;
}

.constraints svg {
  width: 13px;
  height: 13px;
  fill: none;
  stroke: #a5a5a5;
}

.canvas {
  flex: 1;
  min-width: 0;
  position: relative;
  overflow: hidden;
}

.scene {
  display: block;
  width: 100%;
  height: 100%;
}

.dim {
  font-size: 10px;
}

.face {
  font-size: 11px;
  font-weight: bold;
}

.side {
  font-size: 8px;
}

.axis {
  font-size: 7px;
  fill: #666;
}

.guide {
  position: absolute;
  top: 1px;
  right: 164px;
  padding: 0 16px;
  display: flex;
  align-items: center;
  gap: 9px;
  background: #fdfdfd;
  font-size: 10px;
  font-weight: bold;
  line-height: 19px;
  white-space: nowrap;
}

.value {
  position: absolute;
  top: 503px;
  left: 475px;
  height: 24px;
  padding: 0 4px 0 3px;
  display: flex;
  align-items: center;
  gap: 4px;
  background: #fdfdfd;
  border-left: 1px solid #999;
}

.value label {
  padding-left: 7px;
  border-left: 1px dotted #999;
}

.value input {
  width: 56px;
  height: 14px;
  border: 1px solid #bbb;
  font: inherit;
  background: linear-gradient(90deg, #d3e5ed 34px, #fff 34px);
}

.view-tools {
  width: 400px;
  height: 36px;
  margin-left: 17px;
  display: grid;
  grid-template-columns: repeat(14, 1fr);
  align-items: center;
}

.view-tools svg {
  width: 20px;
  height: 18px;
}

.hm-status {
  height: 20px;
  padding: 2px 13px 0 6px;
  display: flex;
  align-items: center;
  justify-content: space-between;
}

.hm-status span {
  display: flex;
  align-items: center;
  gap: 3px;
}

/* taskbar */
.taskbar {
  height: 37px;
  display: flex;
  align-items: center;
  background: linear-gradient(90deg, #26262b 40%, #1a2430 75%);
}

.taskbar button {
  width: 34px;
  height: 35px;
  position: relative;
}

.taskbar .edge {
  width: 5px;
  height: 12px;
  margin-right: 5px;
  border-radius: 0 6px 6px 0;
  background: #35a56b;
}

.taskbar .active {
  width: 30px;
  margin-left: 1px;
  background: #313237;
}

.run::after {
  content: "";
  position: absolute;
  bottom: 3px;
  width: 4px;
  height: 2px;
  background: #aaa;
}

.taskbar .active::after {
  width: 12px;
  background: #ccc;
}
```
